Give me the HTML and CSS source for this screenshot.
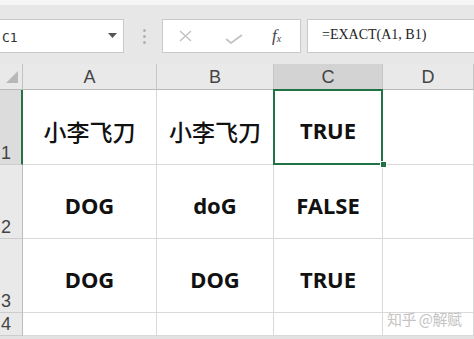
FILE: index.html
```html
<!DOCTYPE html>
<html>
<head>
  <meta charset="UTF-8">
  <link rel="stylesheet" href="styles.css">
</head>
<body>
  <div class="app">
    <div class="toolbar">
      <div class="namebox">
        <span class="ref">C1</span>
        <svg class="drop" width="9" height="5" viewBox="0 0 9 5"><path d="M0 0h9L4.5 5z" fill="#555"/></svg>
      </div>
      <div class="grip"><i></i><i></i><i></i></div>
      <div class="fx-buttons">
        <svg class="btn-x" width="15" height="12" viewBox="0 0 15 12"><path d="M2 1l11 10M13 1L2 11" stroke="#c4c4c4" stroke-width="1.6" fill="none"/></svg>
        <svg class="btn-ok" width="18" height="10" viewBox="0 0 18 10"><path d="M1 5l5 4L17 1" stroke="#c4c4c4" stroke-width="1.8" fill="none"/></svg>
        <span class="fx">f<sub>x</sub></span>
      </div>
      <div class="formula">=EXACT(A1, B1)</div>
    </div>

    <div class="sheet">
      <div class="corner">
        <svg width="12" height="12" viewBox="0 0 12 12"><path d="M12 0v12H0z" fill="#b8b8b8"/></svg>
      </div>
      <div class="col-head">A</div>
      <div class="col-head">B</div>
      <div class="col-head active">C</div>
      <div class="col-head">D</div>

      <div class="row-head active">1</div>
      <div class="cell cjk">小李飞刀</div>
      <div class="cell cjk">小李飞刀</div>
      <div class="cell selected">TRUE</div>
      <div class="cell"></div>

      <div class="row-head">2</div>
      <div class="cell">DOG</div>
      <div class="cell">doG</div>
      <div class="cell">FALSE</div>
      <div class="cell"></div>

      <div class="row-head">3</div>
      <div class="cell">DOG</div>
      <div class="cell">DOG</div>
      <div class="cell">TRUE</div>
      <div class="cell"></div>

      <div class="row-head">4</div>
      <div class="cell"></div>
      <div class="cell"></div>
      <div class="cell"></div>
      <div class="cell"></div>
    </div>

    <div class="watermark">知乎 @解赋</div>
  </div>
</body>
</html>
```

FILE: styles.css
```css
* {
  box-sizing: border-box;
}
body {
  margin: 0;
  padding: 0;
  background: #e2e2e2;
  font-family: "Liberation Sans", Arial, sans-serif;
}
.app {
  position: relative;
  width: 474px;
  height: 339px;
  overflow: hidden;
  background: #e2e2e2;
}
.toolbar {
  display: flex;
  align-items: flex-start;
  height: 64px;
  padding-top: 19px;
  background: linear-gradient(#f6f6f6 0, #f6f6f6 5px, #e7e7e7 5px);
}
.namebox {
  display: flex;
  align-items: center;
  justify-content: space-between;
  width: 125px;
  height: 34px;
  margin-left: -1px;
  padding: 0 6px 0 2px;
  background: white;
  border: 1px solid #c9c9c9;
}
.ref {
  font-family: "DejaVu Sans Mono", monospace;
  font-size: 13px;
  color: #333;
  padding-top: 2px;
}
.drop {
  margin-top: -2px;
}
.grip {
  display: flex;
  flex-direction: column;
  align-items: center;
  justify-content: center;
  gap: 3px;
  width: 38px;
  height: 34px;
  padding-left: 2px;
}
.grip i {
  display: block;
  width: 3px;
  height: 3px;
  border-radius: 50%;
  background: #b2b2b2;
}
.fx-buttons {
  display: flex;
  align-items: center;
  width: 139px;
  height: 34px;
  margin-right: 6px;
  padding-left: 15px;
  background: white;
  border: 1px solid #c9c9c9;
}
.btn-x {
  margin-right: 32px;
}
.btn-ok {
  margin-top: 6px;
  margin-right: 29px;
}
.fx {
  font-family: "Liberation Serif", serif;
  font-style: italic;
  font-size: 17px;
  color: #444;
}
.fx sub {
  font-size: 10px;
  vertical-align: -1px;
}
.formula {
  flex: 1;
  height: 34px;
  margin-right: -2px;
  padding: 7px 0 0 14px;
  background: white;
  border: 1px solid #c9c9c9;
  font-family: "Liberation Serif", serif;
  font-size: 14px;
  color: #222;
}
.sheet {
  display: grid;
  grid-template-columns: 23px 134px 117px 109px 1fr;
  grid-template-rows: 26px 75px 74px 74px 23px;
  background: white;
}
.corner {
  display: flex;
  align-items: flex-end;
  justify-content: flex-end;
  padding: 0 4px 6px 0;
  background: #e9e9e9;
  border-right: 1px solid #c2c2c2;
  border-bottom: 1px solid #b9b9b9;
}
.col-head {
  display: flex;
  align-items: flex-end;
  justify-content: center;
  padding-bottom: 1px;
  background: #e9e9e9;
  border-right: 1px solid #c6c6c6;
  border-bottom: 1px solid #b9b9b9;
  font-size: 18px;
  color: #444;
}
.col-head.active {
  background: #d3d3d3;
}
.row-head {
  display: flex;
  align-items: flex-end;
  padding: 0 0 1px 1px;
  background: #e9e9e9;
  border-right: 1px solid #bdbdbd;
  border-bottom: 1px solid #cdcdcd;
  font-size: 18px;
  line-height: 20px;
  color: #444;
}
.row-head.active {
  background: #dcdcdc;
  border-right: 2px solid #217346;
}
.cell {
  display: flex;
  align-items: center;
  justify-content: center;
  padding-top: 6px;
  border-right: 1px solid #d9d9d9;
  border-bottom: 1px solid #d9d9d9;
  font-family: "Noto Sans", sans-serif;
  font-weight: bold;
  font-size: 22px;
  color: #111;
}
.cell.cjk {
  font-family: "Noto Sans CJK SC", sans-serif;
  font-weight: 500;
  font-size: 23px;
  padding-top: 8px;
}
.selected {
  position: relative;
}
.selected::before {
  content: "";
  position: absolute;
  top: -1px;
  left: -1px;
  right: -1px;
  bottom: -1px;
  border: 2px solid #217346;
}
.selected::after {
  content: "";
  position: absolute;
  right: -5px;
  bottom: -4px;
  width: 5px;
  height: 5px;
  background: #217346;
  border: 1px solid white;
}
.watermark {
  position: absolute;
  left: 387px;
  top: 308px;
  font-family: "Noto Sans CJK SC", sans-serif;
  font-size: 15px;
  color: #c4c4c4;
  letter-spacing: -0.5px;
}
```
